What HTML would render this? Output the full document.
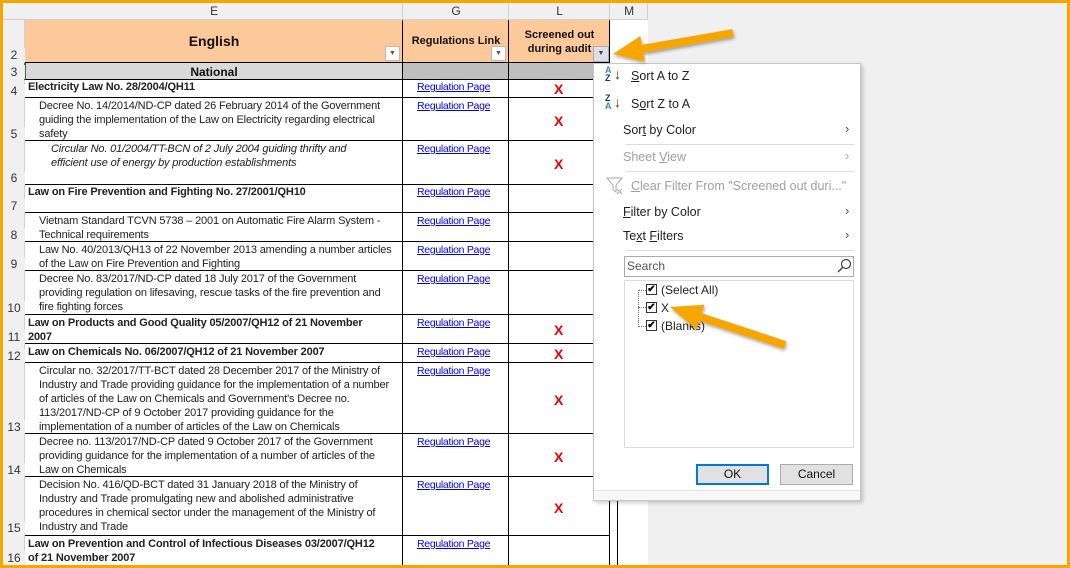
<!DOCTYPE html>
<html><head><meta charset="utf-8">
<style>
*{margin:0;padding:0;box-sizing:border-box}
body{width:1070px;height:568px;overflow:hidden;background:#fff;font-family:"Liberation Sans",Arial,sans-serif;position:relative}
.a{position:absolute}
.c{font-size:11px;line-height:14px;color:#222;letter-spacing:-0.15px;white-space:nowrap}
.b{font-weight:bold}
.rn{position:absolute;left:3px;width:22px;font-size:12px;color:#333;text-align:center;background:#f0f0f0}
.lk{position:absolute;left:417px;font-size:10.5px;color:#0000ee;text-decoration:underline;letter-spacing:-0.3px}
.x{position:absolute;left:554px;color:#e00;font-weight:bold;font-size:14px}
.hl{position:absolute;left:25px;width:585px;height:1px;background:#000}
.mi{position:absolute;left:623px;font-size:12.5px;color:#222}
.sep{position:absolute;left:626px;width:228px;height:1px;background:#ddd}
.chev{position:absolute;left:845px;font-size:13px;color:#555}
.cb{position:absolute;left:646px;width:11px;height:11px;border:1px solid #333;background:#fff;font-size:10px;line-height:9px;text-align:center;color:#000;font-weight:bold}
</style></head><body>
<div class="a" style="left:648px;top:0;width:422px;height:568px;background:#f0f0f0"></div>
<div class="a" style="left:0;top:0;width:648px;height:20px;background:#f0f0f0;border-bottom:1px solid #d0d0d0"></div>
<div class="a c" style="left:25px;top:4px;width:378px;text-align:center;font-size:12px;color:#333">E</div>
<div class="a c" style="left:403px;top:4px;width:106px;text-align:center;font-size:12px;color:#333">G</div>
<div class="a c" style="left:509px;top:4px;width:101px;text-align:center;font-size:12px;color:#333">L</div>
<div class="a c" style="left:610px;top:4px;width:38px;text-align:center;font-size:12px;color:#333">M</div>
<div class="a" style="left:402px;top:3px;width:1px;height:17px;background:#d0d0d0"></div>
<div class="a" style="left:508px;top:3px;width:1px;height:17px;background:#d0d0d0"></div>
<div class="a" style="left:609px;top:3px;width:1px;height:17px;background:#d0d0d0"></div>
<div class="a" style="left:647px;top:3px;width:1px;height:60px;background:#d0d0d0"></div>
<div class="a" style="left:0;top:20px;width:25px;height:548px;background:#f0f0f0;border-right:1px solid #d0d0d0"></div>
<div class="a" style="left:25px;top:20px;width:585px;height:43px;background:#fdc99b"></div>
<div class="a" style="left:610px;top:20px;width:38px;height:43px;background:#fff"></div>
<div class="a b" style="left:25px;top:33px;width:378px;text-align:center;font-size:14px;color:#111">English</div>
<div class="a b" style="left:403px;top:35px;width:106px;text-align:center;font-size:11px;color:#111">Regulations Link</div>
<div class="a b" style="left:509px;top:28px;width:101px;text-align:center;font-size:11px;line-height:14px;color:#111">Screened out<br>during audit</div>
<div class="a" style="left:385px;top:46px;width:15px;height:15px;background:#fff;border:1px solid #bbb;font-size:7px;text-align:center;line-height:13px;color:#555">▼</div>
<div class="a" style="left:491px;top:46px;width:15px;height:15px;background:#fff;border:1px solid #bbb;font-size:7px;text-align:center;line-height:13px;color:#555">▼</div>
<div class="a" style="left:593px;top:46px;width:16px;height:16px;background:#dde0e8;border:1px solid #aab;font-size:7px;text-align:center;line-height:14px;color:#444">▼</div>
<div class="rn" style="top:48px">2</div>
<div class="a" style="left:25px;top:63px;width:378px;height:17px;background:#d9d9d9"></div>
<div class="a" style="left:403px;top:63px;width:207px;height:17px;background:#bfbfbf"></div>
<div class="a b" style="left:25px;top:65px;width:378px;text-align:center;font-size:12px;color:#111">National</div>
<div class="a" style="left:24px;top:63px;width:2px;height:17px;background:#217346"></div>
<div class="rn" style="top:65px">3</div>
<div class="a" style="left:402px;top:20px;width:1px;height:548px;background:#000"></div>
<div class="a" style="left:508px;top:20px;width:1px;height:548px;background:#000"></div>
<div class="a" style="left:609px;top:20px;width:1px;height:548px;background:#000"></div>
<div class="hl" style="top:62px"></div>
<div class="hl" style="top:79px"></div>
<div class="hl" style="top:97px"></div>
<div class="hl" style="top:140px"></div>
<div class="hl" style="top:184px"></div>
<div class="hl" style="top:212px"></div>
<div class="hl" style="top:241px"></div>
<div class="hl" style="top:270px"></div>
<div class="hl" style="top:314px"></div>
<div class="hl" style="top:343px"></div>
<div class="hl" style="top:362px"></div>
<div class="hl" style="top:433px"></div>
<div class="hl" style="top:476px"></div>
<div class="hl" style="top:535px;width:593px"></div>
<div class="rn" style="top:84px">4</div><div class="a c b" style="left:28px;top:80px">Electricity Law No. 28/2004/QH11</div><div class="lk" style="top:81px">Regulation Page</div><div class="x" style="top:81px">X</div>
<div class="rn" style="top:127px">5</div><div class="a c" style="left:39px;top:99px">Decree No. 14/2014/ND-CP dated 26 February 2014 of the Government<br>guiding the implementation of the Law on Electricity regarding electrical<br>safety</div><div class="lk" style="top:100px">Regulation Page</div><div class="x" style="top:113px">X</div>
<div class="rn" style="top:171px">6</div><div class="a c" style="left:51px;top:142px;font-style:italic">Circular No. 01/2004/TT-BCN of 2 July 2004 guiding thrifty and<br>efficient use of energy by production establishments</div><div class="lk" style="top:143px">Regulation Page</div><div class="x" style="top:156px">X</div>
<div class="rn" style="top:199px">7</div><div class="a c b" style="left:28px;top:185px">Law on Fire Prevention and Fighting No. 27/2001/QH10</div><div class="lk" style="top:186px">Regulation Page</div>
<div class="rn" style="top:228px">8</div><div class="a c" style="left:39px;top:214px">Vietnam Standard TCVN 5738 – 2001 on Automatic Fire Alarm System -<br>Technical requirements</div><div class="lk" style="top:215px">Regulation Page</div>
<div class="rn" style="top:257px">9</div><div class="a c" style="left:39px;top:243px">Law No. 40/2013/QH13 of 22 November 2013 amending a number articles<br>of the Law on Fire Prevention and Fighting</div><div class="lk" style="top:244px">Regulation Page</div>
<div class="rn" style="top:301px">10</div><div class="a c" style="left:39px;top:272px">Decree No. 83/2017/ND-CP dated 18 July 2017 of the Government<br>providing regulation on lifesaving, rescue tasks of the fire prevention and<br>fire fighting forces</div><div class="lk" style="top:273px">Regulation Page</div>
<div class="rn" style="top:330px">11</div><div class="a c b" style="left:28px;top:316px">Law on Products and Good Quality 05/2007/QH12 of 21 November<br>2007</div><div class="lk" style="top:317px">Regulation Page</div><div class="x" style="top:322px">X</div>
<div class="rn" style="top:349px">12</div><div class="a c b" style="left:28px;top:345px">Law on Chemicals No. 06/2007/QH12 of 21 November 2007</div><div class="lk" style="top:346px">Regulation Page</div><div class="x" style="top:346px">X</div>
<div class="rn" style="top:420px">13</div><div class="a c" style="left:39px;top:364px">Circular no. 32/2017/TT-BCT dated 28 December 2017 of the Ministry of<br>Industry and Trade providing guidance for the implementation of a number<br>of articles of the Law on Chemicals and Government's Decree no.<br>113/2017/ND-CP of 9 October 2017 providing guidance for the<br>implementation of a number of articles of the Law on Chemicals</div><div class="lk" style="top:365px">Regulation Page</div><div class="x" style="top:392px">X</div>
<div class="rn" style="top:463px">14</div><div class="a c" style="left:39px;top:435px">Decree no. 113/2017/ND-CP dated 9 October 2017 of the Government<br>providing guidance for the implementation of a number of articles of the<br>Law on Chemicals</div><div class="lk" style="top:436px">Regulation Page</div><div class="x" style="top:449px">X</div>
<div class="rn" style="top:521px">15</div><div class="a c" style="left:39px;top:478px">Decision No. 416/QD-BCT dated 31 January 2018 of the Ministry of<br>Industry and Trade promulgating new and abolished administrative<br>procedures in chemical sector under the management of the Ministry of<br>Industry and Trade</div><div class="lk" style="top:479px">Regulation Page</div><div class="x" style="top:500px">X</div>
<div class="rn" style="top:551px">16</div><div class="a c b" style="left:28px;top:537px">Law on Prevention and Control of Infectious Diseases 03/2007/QH12<br>of 21 November 2007</div><div class="lk" style="top:538px">Regulation Page</div>
<div class="a" style="left:610px;top:500px;width:38px;height:68px;background:#fff"></div>
<div class="a" style="left:617px;top:500px;width:1px;height:68px;background:#000"></div>
<div class="a" style="left:593px;top:63px;width:268px;height:438px;background:#fff;border:1px solid #c6c6c6;box-shadow:2px 2px 4px rgba(0,0,0,.2)"></div>
<div class="a" style="left:605px;top:66px;font-size:9px;line-height:9px;font-weight:bold;color:#2b88d8">A</div><div class="a" style="left:605px;top:74px;font-size:9px;line-height:9px;font-weight:bold;color:#333">Z</div><div class="a" style="left:614px;top:66px;font-size:14px;color:#333">↓</div>
<div class="mi" style="left:631px;top:69px"><u>S</u>ort A to Z</div>
<div class="a" style="left:605px;top:94px;font-size:9px;line-height:9px;font-weight:bold;color:#333">Z</div><div class="a" style="left:605px;top:102px;font-size:9px;line-height:9px;font-weight:bold;color:#2b88d8">A</div><div class="a" style="left:614px;top:94px;font-size:14px;color:#333">↓</div>
<div class="mi" style="left:631px;top:97px">S<u>o</u>rt Z to A</div>
<div class="mi" style="top:123px">Sor<u>t</u> by Color</div><div class="chev" style="top:121px">›</div>
<div class="sep" style="top:144px"></div>
<div class="mi" style="top:150px;color:#a0a0a0">Sheet <u>V</u>iew</div><div class="chev" style="top:148px;color:#aaa">›</div>
<div class="sep" style="top:171px"></div>
<svg class="a" style="left:606px;top:177px" width="18" height="18" viewBox="0 0 18 18"><path d="M1 1h15l-6 7v7l-3-2V8z" fill="none" stroke="#aaa"/><path d="M11 12l5 5M16 12l-5 5" stroke="#aaa"/></svg>
<div class="mi" style="left:631px;top:179px;color:#a0a0a0"><u>C</u>lear Filter From "Screened out duri..."</div>
<div class="mi" style="top:205px"><u>F</u>ilter by Color</div><div class="chev" style="top:203px">›</div>
<div class="mi" style="top:229px">Te<u>x</u>t <u>F</u>ilters</div><div class="chev" style="top:227px">›</div>
<div class="sep" style="top:250px"></div>
<div class="a" style="left:624px;top:256px;width:230px;height:21px;border:1px solid #aaa"></div>
<div class="a" style="left:627px;top:259px;font-size:12px;color:#555">Search</div>
<svg class="a" style="left:836px;top:258px" width="16" height="16" viewBox="0 0 16 16"><circle cx="10" cy="6" r="4.5" fill="none" stroke="#444" stroke-width="1.2"/><path d="M7 9L2 14" stroke="#444" stroke-width="1.4"/></svg>
<div class="a" style="left:624px;top:280px;width:230px;height:168px;border:1px solid #ddd"></div>
<div class="a" style="left:638px;top:290px;width:1px;height:37px;border-left:1px dotted #777"></div>
<div class="a" style="left:638px;top:290px;width:8px;border-top:1px dotted #777"></div>
<div class="a" style="left:638px;top:307px;width:8px;border-top:1px dotted #777"></div>
<div class="a" style="left:638px;top:326px;width:8px;border-top:1px dotted #777"></div>
<div class="cb" style="top:284px">✔</div><div class="a" style="left:661px;top:283px;font-size:12px;color:#222">(Select All)</div>
<div class="cb" style="top:302px">✔</div><div class="a" style="left:661px;top:301px;font-size:12px;color:#222">X</div>
<div class="cb" style="top:320px">✔</div><div class="a" style="left:661px;top:319px;font-size:12px;color:#222">(Blanks)</div>
<div class="a" style="left:696px;top:464px;width:73px;height:21px;background:#e1e1e1;border:2px solid #0078d7;font-size:12px;text-align:center;line-height:17px;color:#111">OK</div>
<div class="a" style="left:780px;top:464px;width:73px;height:21px;background:#e1e1e1;border:1px solid #adadad;font-size:12px;text-align:center;line-height:19px;color:#111">Cancel</div>
<div class="a" style="left:594px;top:490px;width:266px;height:1px;background:#e6e6e6"></div>
<div class="a" style="left:594px;top:491px;width:266px;height:9px;background:#f7f7f7"></div>
<svg class="a" style="left:0;top:0" width="1070" height="568">
<defs><filter id="s" x="-20%" y="-50%" width="140%" height="200%"><feDropShadow dx="1" dy="2" stdDeviation="1.5" flood-opacity=".35"/></filter></defs>
<g filter="url(#s)" fill="#f7a600">
<path d="M732.3 29.1 L641.8 44.9 L640.3 36 L613 54 L644.7 61.6 L643.2 52.7 L733.7 36.9 Z"/>
<path d="M786.3 341.2 L701.7 313.2 L704.5 304.7 L670 307 L696.3 329.4 L699.1 320.8 L783.7 348.8 Z"/>
</g></svg>
<div class="a" style="left:0;top:0;width:1070px;height:568px;border:3px solid #f7a600"></div>
</body></html>
